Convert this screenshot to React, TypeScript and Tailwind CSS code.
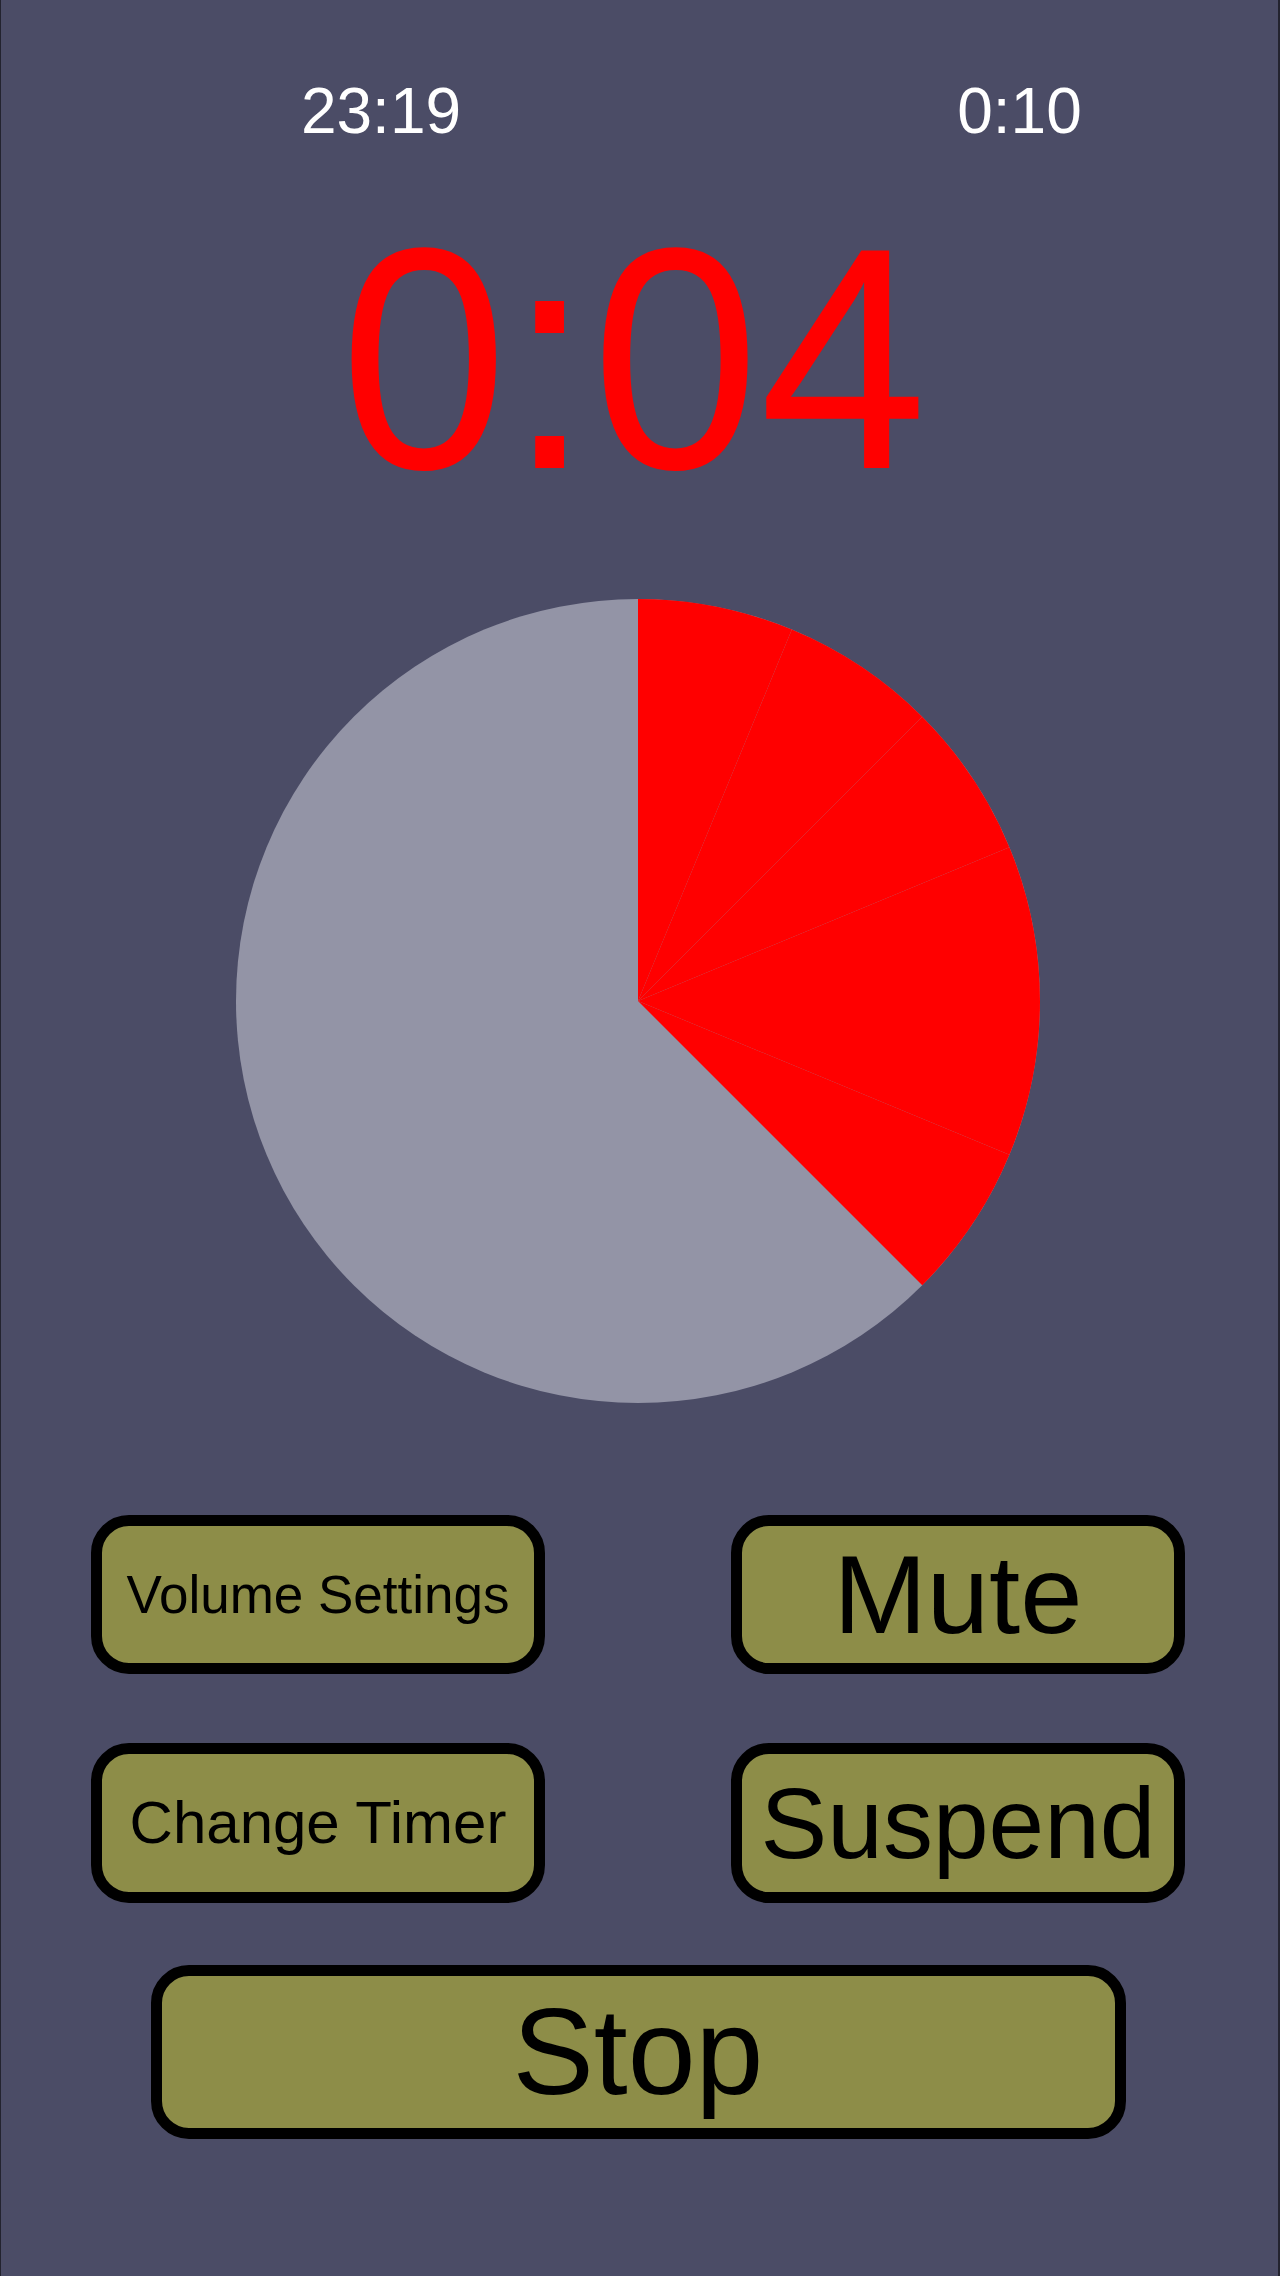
import React from "react";

const FONT = { fontFamily: '"Liberation Sans", Arial, sans-serif' };

const SIZE = 804;
const R = SIZE / 2;

// point on the circle, angle in degrees clockwise from 12 o'clock
const pt = (deg: number) => {
    const a = (deg * Math.PI) / 180;
    return `${(R + R * Math.sin(a)).toFixed(2)} ${(R - R * Math.cos(a)).toFixed(2)}`;
};

const PieTimer = ({ total, elapsed }: { total: number; elapsed: number }) => {
    const step = 360 / total;
    return (
        <svg width={SIZE} height={SIZE} viewBox={`0 0 ${SIZE} ${SIZE}`} className="block">
            <circle cx={R} cy={R} r={R} fill="#9394a6" />
            {Array.from({ length: elapsed }).map((_, i) => (
                <path
                    key={i}
                    d={`M ${R} ${R} L ${pt(i * step)} A ${R} ${R} 0 0 1 ${pt((i + 1) * step)} Z`}
                    fill="#ff0000"
                />
            ))}
        </svg>
    );
};

const TimerButton = ({ label, size, className = "" }: { label: string; size: string; className?: string }) => (
    <button
        className={`flex items-center justify-center bg-[#8d8d48] border-[11px] border-black rounded-[38px] text-black leading-none ${size} ${className}`}
        style={FONT}
    >
        {label}
    </button>
);

const App = () => {
    return (
        <div className="min-h-[2276px] w-full bg-[#4b4c66] border-l border-r-2 border-[#23232f] flex flex-col" style={FONT}>
            {/* Clock + timer length */}
            <div className="flex pt-[79px] text-white text-[64px] leading-none">
                <div className="w-[760px] text-center">23:19</div>
                <div className="flex-1 text-center">0:10</div>
            </div>

            {/* Remaining time */}
            <div className="mt-[58px] pr-[12px] text-center text-[#ff0000] text-[316px] leading-none">
                <span className="inline-block scale-x-[0.955]">0:04</span>
            </div>

            {/* Pie */}
            <div className="mt-[82px] flex justify-center pr-[4px]">
                <PieTimer total={16} elapsed={6} />
            </div>

            {/* Controls */}
            <div className="mt-[112px] ml-[90px] w-[1094px] flex flex-col">
                <div className="grid grid-cols-[454px_454px] gap-x-[186px] gap-y-[69px]">
                    <TimerButton label="Volume Settings" size="h-[159px] text-[53px]" />
                    <TimerButton label="Mute" size="h-[159px] text-[112px]" />
                    <TimerButton label="Change Timer" size="h-[160px] text-[60px]" />
                    <TimerButton label="Suspend" size="h-[160px] text-[100px]" />
                </div>
                <TimerButton label="Stop" size="mt-[62px] mx-auto w-[975px] h-[174px] text-[122px]" />
            </div>
        </div>
    );
};

export default App;
